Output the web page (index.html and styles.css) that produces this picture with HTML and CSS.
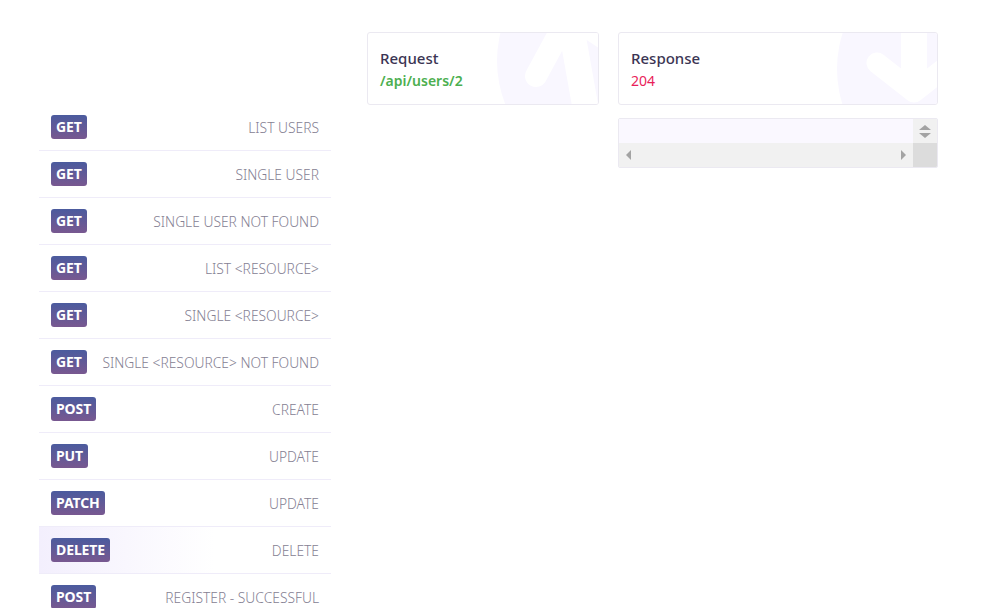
FILE: index.html
```html
<!DOCTYPE html>
<html lang="en">

<head>
    <meta charset="UTF-8">
    <title>Try it out</title>
    <link rel="stylesheet" href="styles.css">
</head>

<body>

    <div class="pagina">

        <ul class="endpoints">
            <li><span class="metodo">GET</span><span class="nome">List users</span></li>
            <li><span class="metodo">GET</span><span class="nome">Single user</span></li>
            <li><span class="metodo">GET</span><span class="nome">Single user not found</span></li>
            <li><span class="metodo">GET</span><span class="nome">List &lt;resource&gt;</span></li>
            <li><span class="metodo">GET</span><span class="nome">Single &lt;resource&gt;</span></li>
            <li><span class="metodo">GET</span><span class="nome">Single &lt;resource&gt; not found</span></li>
            <li><span class="metodo">POST</span><span class="nome">Create</span></li>
            <li><span class="metodo">PUT</span><span class="nome">Update</span></li>
            <li><span class="metodo">PATCH</span><span class="nome">Update</span></li>
            <li class="ativo"><span class="metodo">DELETE</span><span class="nome">Delete</span></li>
            <li><span class="metodo">POST</span><span class="nome">Register - successful</span></li>
        </ul>

        <div class="console">
            <div class="coluna">
                <div class="cartao">
                    <svg class="marca" width="232" height="73" viewBox="0 0 232 73">
                        <circle cx="246" cy="28" r="117" fill="#f9f7ff"/>
                        <line x1="201" y1="-18" x2="222" y2="100" stroke="#fff" stroke-width="26"/>
                        <polyline points="168,43 201,-18 258,20" fill="none" stroke="#fff" stroke-width="22" stroke-linecap="round" stroke-linejoin="round"/>
                    </svg>
                    <h4>Request</h4>
                    <p class="caminho">/api/users/2</p>
                </div>
            </div>

            <div class="coluna">
                <div class="cartao">
                    <svg class="marca" width="320" height="73" viewBox="0 0 320 73">
                        <circle cx="335" cy="36" r="117" fill="#f9f7ff"/>
                        <line x1="295" y1="-30" x2="295" y2="59" stroke="#fff" stroke-width="26"/>
                        <polyline points="258,30 295,59 332,30" fill="none" stroke="#fff" stroke-width="21" stroke-linecap="round" stroke-linejoin="round"/>
                    </svg>
                    <h4>Response</h4>
                    <p class="status">204</p>
                </div>

                <div class="saida">
                    <div class="saida-topo">
                        <div class="saida-texto"></div>
                        <div class="barra-v">
                            <span class="seta-cima"></span>
                            <span class="seta-baixo"></span>
                        </div>
                    </div>
                    <div class="saida-base">
                        <div class="barra-h">
                            <span class="seta-esq"></span>
                            <span class="seta-dir"></span>
                        </div>
                        <div class="canto"></div>
                    </div>
                </div>
            </div>
        </div>

    </div>

</body>

</html>
```

FILE: styles.css
```css
body {
    margin: 0;
    background: #fff;
    font-family: "Noto Sans", "Open Sans", Arial, sans-serif;
    color: #3b3553;
}

.pagina {
    display: grid;
    grid-template-columns: 292px 1fr;
    column-gap: 36px;
    padding: 32px 51px 0 39px;
}

/* lista de endpoints */

.endpoints {
    list-style: none;
    margin: 72px 0 0;
    padding: 0;
}

.endpoints li {
    display: flex;
    align-items: center;
    justify-content: space-between;
    height: 46px;
    padding: 0 12px;
    border-bottom: 1px solid #efecf9;
}

.endpoints li.ativo {
    background: linear-gradient(to right, #f3effd, #fff 60%);
}

.metodo {
    display: inline-block;
    height: 24px;
    line-height: 24px;
    padding: 0 5px;
    border-radius: 3px;
    background: linear-gradient(#4b5b9e, #785890);
    color: #fff;
    font-size: 14px;
    font-weight: 700;
    letter-spacing: -0.1px;
}

.nome {
    color: #858193;
    font-size: 13.8px;
    font-weight: 300;
    text-transform: uppercase;
}

/* console */

.console {
    display: grid;
    grid-template-columns: 232px 320px;
    column-gap: 19px;
    align-items: start;
}

.cartao {
    position: relative;
    overflow: hidden;
    height: 73px;
    box-sizing: border-box;
    padding: 15px 12px 0;
    border: 1px solid #ebe9f1;
    border-radius: 3px;
}

.marca {
    position: absolute;
    top: 0;
    left: 0;
}

.cartao h4,
.cartao p {
    position: relative;
    margin: 0;
}

.cartao h4 {
    font-size: 15px;
    font-weight: 500;
    line-height: 20px;
}

.cartao p {
    margin-top: 3px;
    font-size: 14px;
    line-height: 20px;
}

.caminho {
    color: #4caf50;
    font-weight: 600;
}

.status {
    color: #e91e5a;
}

/* caixa de saída com barras de rolagem */

.saida {
    margin-top: 13px;
    border: 1px solid #ebe9f1;
    border-radius: 2px;
    overflow: hidden;
}

.saida-topo,
.saida-base {
    display: flex;
}

.saida-texto {
    flex: 1;
    height: 24px;
    background: #faf8ff;
}

.barra-v {
    width: 24px;
    height: 24px;
    background: #f1f1f1;
    display: flex;
    flex-direction: column;
    align-items: center;
    justify-content: center;
    gap: 3px;
}

.barra-h {
    flex: 1;
    height: 24px;
    background: #f1f1f1;
    display: flex;
    align-items: center;
    justify-content: space-between;
    padding: 0 7px;
}

.canto {
    width: 24px;
    height: 24px;
    background: #dcdcdc;
}

.seta-cima,
.seta-baixo,
.seta-esq,
.seta-dir {
    width: 0;
    height: 0;
    border: 5px solid transparent;
}

.seta-cima {
    border-top: 0;
    border-left-width: 6px;
    border-right-width: 6px;
    border-bottom-color: #a3a3a3;
}

.seta-baixo {
    border-bottom: 0;
    border-left-width: 6px;
    border-right-width: 6px;
    border-top-color: #a3a3a3;
}

.seta-esq {
    border-left: 0;
    border-right-color: #a3a3a3;
}

.seta-dir {
    border-right: 0;
    border-left-color: #a3a3a3;
}
```
